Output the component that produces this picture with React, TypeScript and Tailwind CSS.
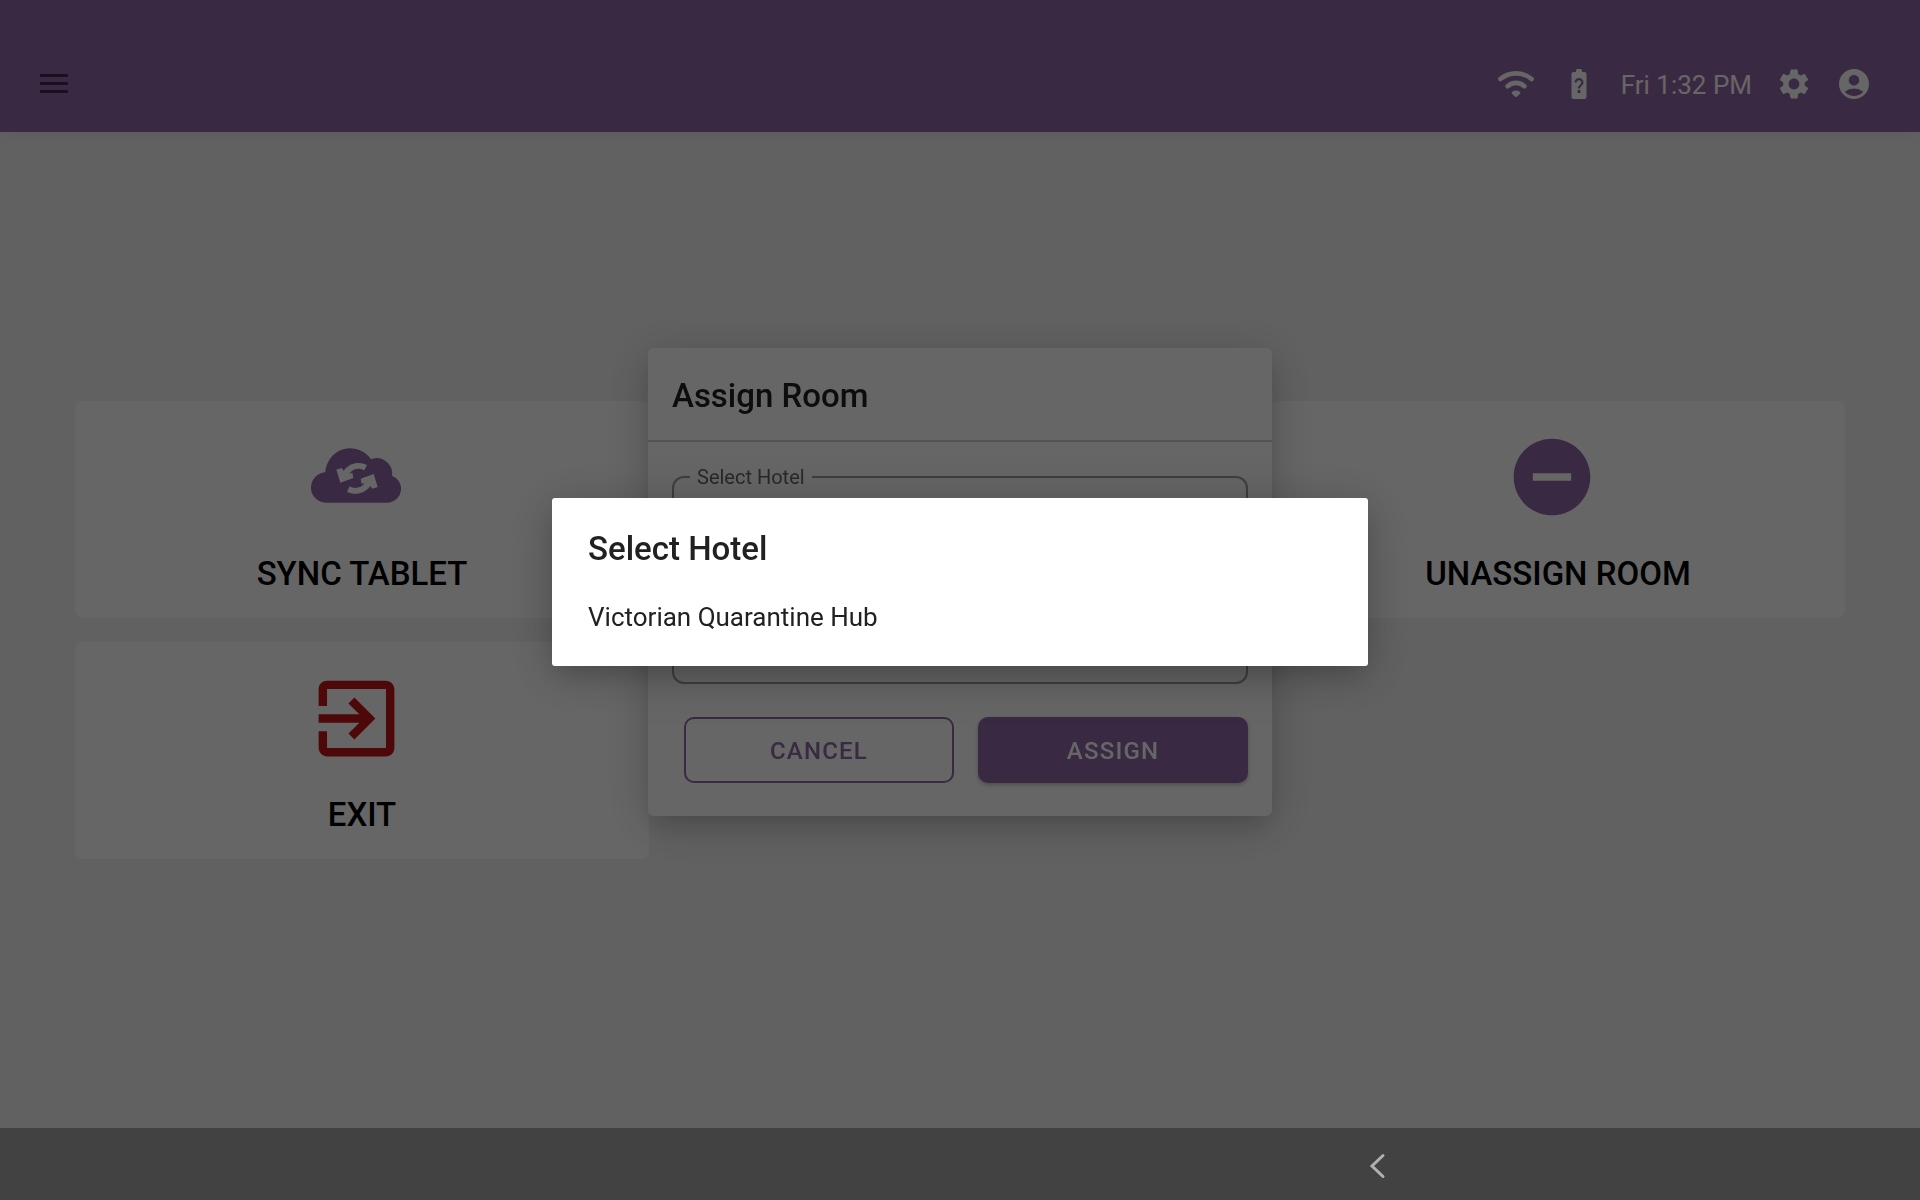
import { useState, type ReactNode } from "react";
import { MdAccountCircle, MdExitToApp, MdRemoveCircle, MdSettings } from "react-icons/md";

const HOTELS = ["Victorian Quarantine Hub"];

function WifiIcon() {
    return (
        <svg viewBox="-3 -4.5 42 36" className="w-[42px] h-9" fill="none" aria-hidden="true">
            <path d="M2.4 8.6A24 24 0 0 1 33.6 8.6" stroke="currentColor" strokeWidth="4.6" strokeLinecap="round" />
            <path d="M9.6 15.8A12 12 0 0 1 26.4 15.8" stroke="currentColor" strokeWidth="4.6" strokeLinecap="round" />
            <path
                d="M14 21.4Q18 18.6 22 21.4Q22.8 22.4 21.8 23.4L18.9 26.2Q18 27 17.1 26.2L14.2 23.4Q13.2 22.4 14 21.4Z"
                fill="currentColor"
            />
        </svg>
    );
}

function BatteryIcon() {
    return (
        <svg viewBox="0 0 24 24" className="size-9" fill="currentColor" aria-hidden="true">
            <path d="M15.67 4H14V3c0-.55-.45-1-1-1h-2c-.55 0-1 .45-1 1v1H8.33C7.6 4 7 4.6 7 5.33v15.33C7 21.4 7.6 22 8.33 22h7.33c.74 0 1.34-.6 1.34-1.33V5.33C17 4.6 16.4 4 15.67 4zm-2.72 13.95h-1.9v-1.9h1.9v1.9zm1.35-5.26s-.38.42-.67.71c-.48.48-.83 1.15-.83 1.6h-1.6c0-.83.46-1.52.93-2l.93-.94c.27-.27.44-.65.44-1.06 0-.83-.67-1.5-1.5-1.5s-1.5.67-1.5 1.5H9c0-1.66 1.34-3 3-3s3 1.34 3 3c0 .66-.27 1.26-.7 1.69z" />
        </svg>
    );
}

function CloudSyncIcon() {
    return (
        <svg viewBox="30 42 276 165" className="w-[92px] h-[55px] overflow-visible" fill="currentColor" fillRule="evenodd" aria-hidden="true">
            <path d="M77 200A45 45 0 0 1 33 156A46 46 0 0 1 76 109A75 75 0 0 1 213 70A46 46 0 0 1 276 119A42 42 0 0 1 267 200ZM201 87C180 76 150 78 131 104L125 96L109 101L121 140L160 126L157 110L148 113C158 98 178 94 193 103ZM141 167C162 178 192 176 211 150L217 158L233 153L221 114L182 128L185 144L194 141C184 156 164 160 149 151Z" />
        </svg>
    );
}

function ActionCard({ label, children }: { label: string; children: ReactNode }) {
    return (
        <button className="flex flex-col items-center gap-[26px] pt-[25px] pb-6 bg-white rounded-lg">
            <span className="mr-3 h-[102px] flex items-center justify-center">{children}</span>
            <span className="text-[33px] leading-10 font-medium text-black uppercase">{label}</span>
        </button>
    );
}

export default function App() {
    const [pickerOpen, setPickerOpen] = useState(true);

    return (
        <div className="min-h-screen flex flex-col bg-[#f2f2f2] font-['Roboto',sans-serif]">
            <header className="relative pt-9 bg-[#9167a5] shadow-[0_2px_12px_rgba(0,0,0,0.06)]">
                <div className="h-24 pl-10 pr-12 flex items-center justify-between">
                    <button aria-label="Menu" className="flex flex-col gap-[5px] pb-0.5">
                        <span className="w-7 h-[3px] bg-[#482852]" />
                        <span className="w-7 h-[3px] bg-[#482852]" />
                        <span className="w-7 h-[3px] bg-[#482852]" />
                    </button>
                    <div className="flex items-center gap-6 text-white">
                        <WifiIcon />
                        <BatteryIcon />
                        <span className="pt-0.5 text-[26px] leading-9">Fri 1:32 PM</span>
                        <button aria-label="Settings">
                            <MdSettings className="size-9" />
                        </button>
                        <button aria-label="Account">
                            <MdAccountCircle className="size-9" />
                        </button>
                    </div>
                </div>
            </header>

            <main className="flex-1 px-[75px] flex flex-col justify-center">
                <div className="grid grid-cols-3 gap-6">
                    <ActionCard label="Sync Tablet">
                        <span className="text-[#9167a5]"><CloudSyncIcon /></span>
                    </ActionCard>
                    <ActionCard label="Assign Room">
                        <MdAccountCircle className="size-[92px] text-[#9167a5]" />
                    </ActionCard>
                    <ActionCard label="Unassign Room">
                        <MdRemoveCircle className="size-[92px] text-[#9167a5]" />
                    </ActionCard>
                    <ActionCard label="Exit">
                        <MdExitToApp className="size-[101px] text-[#c61517]" />
                    </ActionCard>
                </div>
            </main>

            {/* Assign room dialog */}
            <div className="fixed inset-0 pt-9 pb-18 flex items-center justify-center">
                <div
                    role="dialog"
                    aria-labelledby="assign-title"
                    className="w-full max-w-[624px] bg-white rounded-md shadow-[0_12px_24px_-6px_rgba(0,0,0,0.16),0_8px_48px_4px_rgba(0,0,0,0.16)]"
                >
                    <h2
                        id="assign-title"
                        className="px-6 pt-7 pb-6 border-b-2 border-[#d0d0d0] text-[33px] leading-10 font-medium text-[#212121]"
                    >
                        Assign Room
                    </h2>
                    <div className="px-6 pt-[25px] pb-[33px]">
                        <div className="flex flex-col gap-[35px]">
                            <fieldset className="border-2 border-[#9e9e9e] rounded-xl px-4">
                                <legend className="px-[7px] text-xl leading-5 text-[#666666]">
                                    <label htmlFor="hotel">Select Hotel</label>
                                </legend>
                                <select id="hotel" defaultValue="" className="w-full h-[74px] px-2 appearance-none text-[26px]">
                                    <option value=""></option>
                                    {HOTELS.map((hotel) => (
                                        <option key={hotel}>{hotel}</option>
                                    ))}
                                </select>
                            </fieldset>
                            <select
                                aria-label="Select Room"
                                className="w-full h-[86px] px-6 border-2 border-[#9e9e9e] rounded-xl appearance-none text-[26px]"
                            />
                        </div>
                        <div className="mt-[33px] pl-3 grid grid-cols-2 gap-6 text-2xl font-medium tracking-wider">
                            <button className="h-[66px] pt-0.5 border-2 border-[#9167a5] rounded-[10px] text-[#9167a5]">CANCEL</button>
                            <button className="h-[66px] pt-0.5 bg-[#9167a5] rounded-[10px] text-white shadow-[0_2px_4px_rgba(0,0,0,0.25)]">
                                ASSIGN
                            </button>
                        </div>
                    </div>
                </div>
            </div>

            {/* Hotel picker */}
            {pickerOpen && (
                <div className="fixed inset-0 pt-9 pb-18 flex items-center justify-center bg-black/60">
                    <div
                        role="dialog"
                        aria-labelledby="picker-title"
                        className="w-full max-w-[816px] px-9 pt-[31px] pb-[31px] bg-white rounded-[3px] text-[#212121] shadow-[0_12px_24px_-6px_rgba(0,0,0,0.16),0_8px_48px_4px_rgba(0,0,0,0.2)]"
                    >
                        <h2 id="picker-title" className="text-[33px] leading-10 font-medium">Select Hotel</h2>
                        <ul className="mt-[30px]">
                            {HOTELS.map((hotel) => (
                                <li key={hotel}>
                                    <button
                                        onClick={() => setPickerOpen(false)}
                                        className="block w-full text-left text-[26px] leading-9"
                                    >
                                        {hotel}
                                    </button>
                                </li>
                            ))}
                        </ul>
                    </div>
                </div>
            )}

            <nav className="relative h-18 pr-[27.6%] flex items-center justify-end bg-[#424242]">
                <button aria-label="Back" className="pt-1">
                    <svg viewBox="0 0 24 28" className="w-6 h-7" fill="none" stroke="#b0b0b0" strokeWidth="3" strokeLinecap="round" aria-hidden="true">
                        <path d="M17 3.5L6 14L17 24.5" />
                    </svg>
                </button>
            </nav>
        </div>
    );
}
